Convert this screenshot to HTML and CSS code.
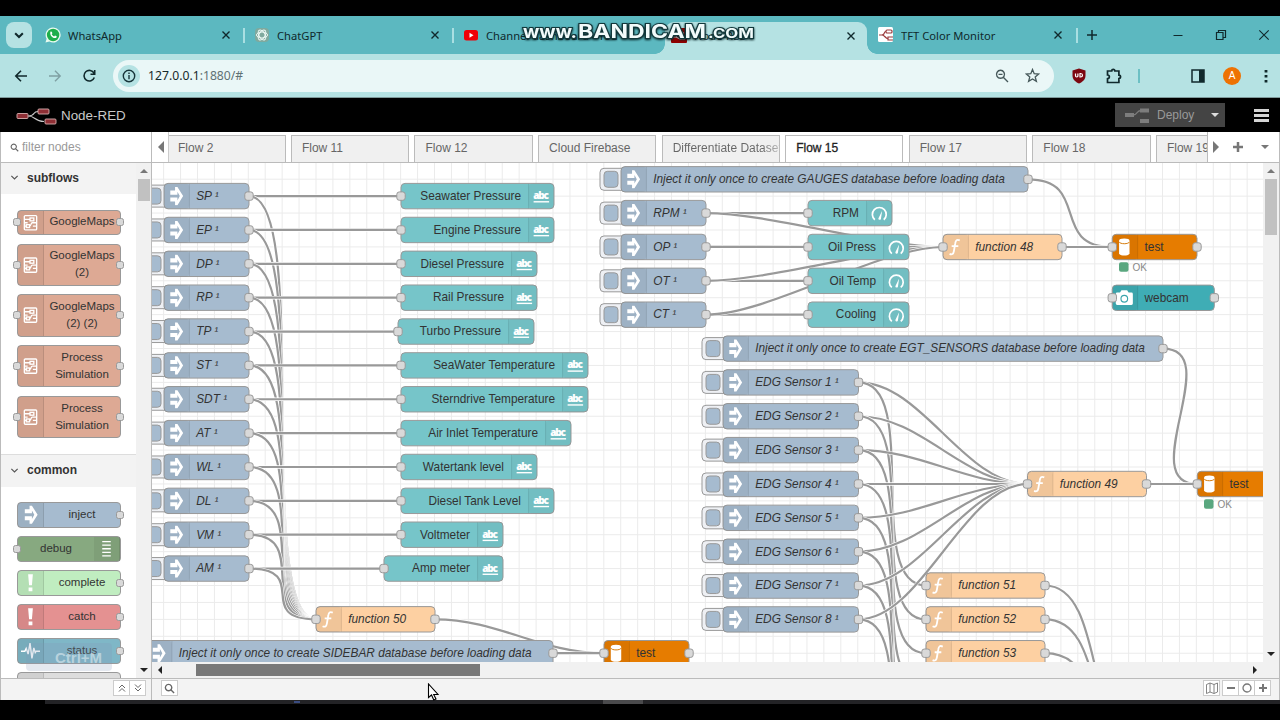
FILE: index.html
```html
<!DOCTYPE html>
<html lang="en">
<head>
    <meta charset="UTF-8">
    <meta name="viewport" content="width=device-width, initial-scale=1.0">
    <title>Node-RED</title>
    <link rel="stylesheet" href="styles.css">
</head>
<body>

    <!-- shared icons -->
    <svg class="defs" width="0" height="0">
        <symbol id="i-close" viewBox="0 0 10 10"><path d="M1.5 1.5l7 7M8.5 1.5l-7 7" stroke="currentColor" stroke-width="1.4" fill="none"/></symbol>
        <symbol id="i-inject" viewBox="0 0 20 20"><path d="M4 4.200h5V.5h2.500L17.500 10l-6 9.500H9v-3.700H4v-4.300h7.500v3L14 10l-2.500-4.500v3H4z" fill="#fff"/></symbol>
        <symbol id="i-subflow" viewBox="0 0 20 20"><g fill="none" stroke="#fff" stroke-width="1.400"><rect x="3.500" y="2.500" width="13" height="15" rx="1"/><path d="M4 6.500h5.500M4 13.500h2.500M9 13.500c2 0 1-3.500 3-3.500h4"/><rect x="9.500" y="5" width="4" height="3"/><rect x="5.500" y="12" width="3.500" height="3"/><path d="M4 10h3M12.500 13.500h4"/></g></symbol>
        <symbol id="i-func" viewBox="0 0 20 20"><path d="M15 3c-3-1.500-4.300 0-4.700 3L8.800 14.500c-.5 3-2 4-4.500 2.800M6.500 9h7" fill="none" stroke="#fff" stroke-width="1.900"/></symbol>
        <symbol id="i-db" viewBox="0 0 20 20"><path d="M4.500 4v12.500c0 3.300 11 3.300 11 0V4z" fill="#fff"/><ellipse cx="10" cy="3.500" rx="5.500" ry="2.400" fill="#fff"/><path d="M4.500 4.600c1 2.600 10 2.600 11 0" fill="none" stroke="#d27500" stroke-width="1"/></symbol>
        <symbol id="i-cam" viewBox="0 0 20 20"><path d="M1 6q0-1.500 1.500-1.500h3L7 2h6l1.500 2.500h3q1.500 0 1.500 1.500v10q0 1.500-1.500 1.500h-15Q1 17.500 1 16z" fill="#fff"/><circle cx="10" cy="11" r="3.500" fill="none" stroke="#3ba5ac" stroke-width="1.200"/></symbol>
        <symbol id="i-gauge" viewBox="0 0 20 20"><path d="M5.300 17A7.300 7.300 0 1 1 14.700 17" fill="none" stroke="#fff" stroke-width="1.800"/><path d="M13 7.500l-1.300 8.700a1.400 1.400 0 0 1-2.700-.6z" fill="#fff"/></symbol>
        <symbol id="i-bang" viewBox="0 0 20 20"><path d="M7.500 1h5l-1 11.500h-3zM8 15h4v4H8z" fill="#fff"/></symbol>
        <symbol id="i-pulse" viewBox="0 0 20 20"><path d="M0 10.500h4l1.500-3 2 6L9.500 2l2 16 2-11 1.500 5 1-1.500h4" fill="none" stroke="#fff" stroke-width="1.500"/></symbol>
        <symbol id="i-list" viewBox="0 0 20 20"><path d="M5.500 2.500h9M5.500 6.200h9M5.500 10h9M5.500 13.800h9M5.500 17.500h9" stroke="#fff" stroke-width="1.500"/></symbol>
        <symbol id="i-search" viewBox="0 0 12 12"><path d="M5 1.500a3.500 3.500 0 1 0 .01 0M7.700 7.700L11 11" fill="none" stroke="currentColor" stroke-width="1.500"/></symbol>
        <symbol id="i-chev" viewBox="0 0 10 10"><path d="M1.500 3.200L5 6.700l3.500-3.500" fill="none" stroke="currentColor" stroke-width="1.300"/></symbol>
    </svg>

    <div class="tabstrip">
        <div class="tab-search"><svg width="12" height="12" viewBox="0 0 10 10"><path d="M1.800 3.500L5 6.700l3.200-3.200" fill="none" stroke="#10292c" stroke-width="1.700"/></svg></div>
        <div class="btab">
            <svg class="fav" viewBox="0 0 16 16"><path d="M8 .5a7.500 7.500 0 1 1-3.600 14L.5 15.600l1.100-3.800A7.500 7.500 0 0 1 8 .5z" fill="#e9fbef"/><circle cx="8.100" cy="8" r="6.200" fill="#1fae4b"/><path d="M5.500 4.500l1.300.2.600 1.600-.7.900c.6 1.200 1.300 1.700 2.400 2.200l.9-.9 1.700.8-.2 1.300c-3 2-7.500-2.300-6-6.100z" fill="#fff"/></svg>
            <span class="bt-title">WhatsApp</span>
            <svg class="x" width="10" height="10"><use href="#i-close"/></svg>
        </div>
        <div class="btab sep">
            <svg class="fav" viewBox="0 0 16 16"><rect x="1" y="1" width="14" height="14" rx="4" fill="#7fa99e"/><g fill="none" stroke="#eefaf6" stroke-width="1"><ellipse cx="8" cy="8" rx="5.500" ry="3"/><ellipse cx="8" cy="8" rx="5.500" ry="3" transform="rotate(60 8 8)"/><ellipse cx="8" cy="8" rx="5.500" ry="3" transform="rotate(120 8 8)"/></g></svg>
            <span class="bt-title">ChatGPT</span>
            <svg class="x" width="10" height="10"><use href="#i-close"/></svg>
        </div>
        <div class="btab sep">
            <svg class="fav" viewBox="0 0 16 16"><rect x="1" y="3" width="14" height="10.500" rx="2.500" fill="#f00008"/><path d="M6.500 5.800v5l4-2.500z" fill="#fff"/></svg>
            <span class="bt-title">Channel dashboard - You</span>
        </div>
        <div class="btab active">
            <svg class="fav" viewBox="0 0 16 16"><rect x="0" y="0" width="16" height="15" rx="1" fill="#8f0000"/><path d="M1 9h4l4-4h4M5 9l4 2h5" stroke="#fff" fill="none"/></svg>
            <span class="bt-title">Node-RED</span>
            <svg class="x" width="10" height="10"><use href="#i-close"/></svg>
        </div>
        <div class="btab last">
            <svg class="fav" viewBox="0 0 16 16"><rect x="0" y="0" width="15" height="15" rx="1.500" fill="#fff"/><g fill="none" stroke="#9a3a3c" stroke-width="1.200"><path d="M1 8h3c3 0 3 3.500 6 3.500M4 8c4-.5 1-3.500 4-3.500"/><rect x="8" y="3" width="6" height="3" rx="1"/><path d="M15 10h-5v3h5"/></g></svg>
            <span class="bt-title">TFT Color Monitor</span>
            <svg class="x" width="10" height="10"><use href="#i-close"/></svg>
        </div>
        <svg class="newtab" width="12" height="12" viewBox="0 0 12 12"><path d="M6 1v10M1 6h10" stroke="#10292c" stroke-width="1.500"/></svg>
        <div class="winctl">
            <svg width="12" height="12" viewBox="0 0 12 12"><path d="M1.500 6.500h9" stroke="#10292c"/></svg>
            <svg width="12" height="12" viewBox="0 0 12 12"><path d="M1.500 3.500h6.500v7H1.500zM3.500 3.500v-2h7v7h-2" fill="none" stroke="#10292c" stroke-width="1.200"/></svg>
            <svg width="12" height="12" viewBox="0 0 12 12"><path d="M1.300 1.300l9.400 9.400M10.700 1.300l-9.400 9.400" stroke="#10292c" stroke-width="1.100"/></svg>
        </div>
        <svg class="bandicam" width="240" height="32" viewBox="0 0 240 32">
            <text x="5" y="21.500" font-size="17" textLength="54" lengthAdjust="spacingAndGlyphs">www.</text>
            <text x="60" y="21.500" font-size="19" textLength="128" lengthAdjust="spacingAndGlyphs">BANDICAM</text>
            <text x="190" y="21.500" font-size="13.500" textLength="46" lengthAdjust="spacingAndGlyphs">.COM</text>
        </svg>
    </div>

    <div class="toolbar">
        <svg class="nav" width="14" height="14" viewBox="0 0 14 14"><path d="M13 7H2M7 1.800L1.800 7 7 12.200" fill="none" stroke="#10292c" stroke-width="1.600"/></svg>
        <svg class="nav" width="14" height="14" viewBox="0 0 14 14"><path d="M1 7h11M7 1.800L12.200 7 7 12.200" fill="none" stroke="#7fa0a3" stroke-width="1.400"/></svg>
        <svg class="nav" width="14" height="14" viewBox="0 0 14 14"><path d="M12 4.200A5.300 5.300 0 1 0 12.300 8.500M12.700 1v4.200H8.500" fill="none" stroke="#10292c" stroke-width="1.600"/></svg>
        <div class="urlbar">
            <div class="info"><svg width="14" height="14" viewBox="0 0 14 14"><circle cx="7" cy="7" r="5.700" fill="none" stroke="#17353a" stroke-width="1.400"/><path d="M7 6v4.200M7 3.600v1.500" stroke="#17353a" stroke-width="1.400"/></svg></div>
            <span class="url">127.0.0.1<em>:1880/#</em></span>
            <svg class="zoom" width="14" height="14" viewBox="0 0 14 14"><path d="M5.500 1.300a4 4 0 1 0 .01 0M8.500 8.500l4.500 4.500M3.500 5.400h4" fill="none" stroke="#46585a" stroke-width="1.400"/></svg>
            <svg width="15" height="15" viewBox="0 0 15 15"><path d="M7.500 1.500l1.700 4.200 4.500.3-3.500 2.900 1.200 4.400-3.900-2.400-3.900 2.400 1.200-4.400L1.300 6l4.500-.3z" fill="none" stroke="#46585a" stroke-width="1.300"/></svg>
        </div>
        <div class="exts">
            <svg width="16" height="16" viewBox="0 0 16 16"><path d="M8 .5l6.500 2v5c0 4-3 6.500-6.500 8C4.500 14 1.500 11.500 1.500 7.500v-5z" fill="#7c0710"/><path d="M4.500 5.500v2.300q0 1.200 1.200 1.200t1.200-1.200V5.500M9 5.500v3.500h.7q1.800 0 1.800-1.700T9.700 5.500z" fill="none" stroke="#fff" stroke-width="1.200"/></svg>
            <svg width="16" height="16" viewBox="0 0 16 16"><path d="M1.500 3h4.200a1.600 1.600 0 0 1 3.200 0h4v4.200a1.600 1.600 0 0 1 0 3.300V14.500H1.500v-3.800c2.500-.2 2.500-3.600 0-3.700z" fill="none" stroke="#10292c" stroke-width="1.700"/></svg>
            <i class="divider"></i>
            <svg class="panel" width="14" height="14" viewBox="0 0 14 14"><rect x="1" y="1" width="12" height="12" fill="none" stroke="#10292c" stroke-width="1.500"/><path d="M8 1h5v12H8z" fill="#10292c"/></svg>
            <b class="avatar">A</b>
            <svg class="dots" width="4" height="14" viewBox="0 0 4 14"><path d="M.6 1h2.800v2.500H.6zM.6 6h2.800v2.500H.6zM.6 11h2.800v2.500H.6z" fill="#10292c"/></svg>
        </div>
    </div>

    <div class="nr-header">
        <svg width="42" height="18" viewBox="0 0 42 18"><g fill="#8f2f35" stroke="#d8b0b0" stroke-width=".9"><path d="M12 9c8 0 4-4.500 10-4.500M12 9c8 0 6 5.500 16 5.500" fill="none" stroke="#c9c9c9" stroke-width="1.200"/><rect x="1" y="6.500" width="11" height="5" rx="1"/><rect x="22" y="2" width="11" height="5" rx="1"/><rect x="29" y="12" width="11" height="5" rx="1"/></g></svg>
        <span class="brand">Node-RED</span>
        <div class="deploy">
            <svg width="26" height="18" viewBox="0 0 26 18"><g fill="#7d7d7d"><rect x="1" y="7" width="9" height="4"/><rect x="16" y="2.500" width="9" height="4"/><rect x="16" y="13" width="9" height="4"/></g><path d="M9 9c5 0 3-4.500 8-4.500" fill="none" stroke="#7d7d7d" stroke-width="1.300"/></svg>
            <span>Deploy</span>
            <i class="tri down light"></i>
        </div>
        <div class="burger"><i></i><i></i><i></i></div>
    </div>

    <div class="main">
        <div class="palette">
            <div class="filter"><svg width="9" height="9"><use href="#i-search"/></svg>filter nodes</div>
            <div class="palette-body">
                <div class="palette-list">
                    <h3><svg width="9" height="9"><use href="#i-chev"/></svg>subflows</h3>
                    <div class="group subflows">
                        <div class="pnode sub"><svg><use href="#i-subflow"/></svg><span>GoogleMaps</span><i class="in"></i><i class="out"></i></div>
                        <div class="pnode sub two"><svg><use href="#i-subflow"/></svg><span>GoogleMaps (2)</span><i class="in"></i><i class="out"></i></div>
                        <div class="pnode sub two"><svg><use href="#i-subflow"/></svg><span>GoogleMaps (2) (2)</span><i class="in"></i><i class="out"></i></div>
                        <div class="pnode sub two"><svg><use href="#i-subflow"/></svg><span>Process Simulation</span><i class="in"></i><i class="out"></i></div>
                        <div class="pnode sub two"><svg><use href="#i-subflow"/></svg><span>Process Simulation</span><i class="in"></i><i class="out"></i></div>
                    </div>
                    <h3 class="bordered"><svg width="9" height="9"><use href="#i-chev"/></svg>common</h3>
                    <div class="group">
                        <div class="pnode inject"><svg><use href="#i-inject"/></svg><span>inject</span><i class="out"></i></div>
                        <div class="pnode debug"><span>debug</span><svg><use href="#i-list"/></svg><i class="in"></i></div>
                        <div class="pnode complete"><svg><use href="#i-bang"/></svg><span>complete</span><i class="out"></i></div>
                        <div class="pnode catch"><svg><use href="#i-bang"/></svg><span>catch</span><i class="out"></i></div>
                        <div class="pnode status"><svg><use href="#i-pulse"/></svg><span>status</span><i class="out"></i></div>
                        <div class="pnode link"><svg></svg><span></span></div>
                    </div>
                </div>
                <div class="vscroll"><i class="tri up"></i><b></b><i class="tri down dark"></i></div>
                <div class="hotkey">Ctrl+M</div>
            </div>
            <div class="footer">
                <div class="btns">
                    <span><svg width="10" height="10" viewBox="0 0 10 10"><path d="M2 5l3-3 3 3M2 8.500l3-3 3 3" fill="none" stroke="#666"/></svg></span>
                    <span><svg width="10" height="10" viewBox="0 0 10 10"><path d="M2 1.500l3 3 3-3M2 5l3 3 3-3" fill="none" stroke="#666"/></svg></span>
                </div>
            </div>
        </div>

        <div class="workspace">
            <div class="flowtabs">
                <div class="scroll-l"><i class="tri left"></i></div>
                <div class="tabs">
                    <div class="ftab first">Flow 2</div>
                    <div class="ftab">Flow 11</div>
                    <div class="ftab">Flow 12</div>
                    <div class="ftab">Cloud Firebase</div>
                    <div class="ftab fade">Differentiate Dataset</div>
                    <div class="ftab current">Flow 15</div>
                    <div class="ftab">Flow 17</div>
                    <div class="ftab">Flow 18</div>
                    <div class="ftab">Flow 19</div>
                </div>
                <div class="tabctl">
                    <i class="tri right"></i>
                    <svg width="10" height="10" viewBox="0 0 10 10"><path d="M5 0v10M0 5h10" stroke="#777" stroke-width="2.500"/></svg>
                    <i class="tri down"></i>
                </div>
            </div>
            <div class="chart">
                <svg id="canvas" width="1111" height="499" viewBox="152 163 1111 499"></svg>
                <div class="vscroll big"><i class="tri up"></i><b></b><i class="tri down dark"></i></div>
            </div>
            <div class="hscroll"><i class="tri left dark"></i><b></b><i class="tri right dark"></i></div>
            <div class="footer">
                <div class="btns"><span><svg width="11" height="11"><use href="#i-search"/></svg></span></div>
                <div class="btns push"><span><svg width="12" height="12" viewBox="0 0 12 12"><path d="M.5 2.500l3.500-1.500 4 1.500 3.500-1.500v9L8 11.500 4 10 .5 11.500zM4 1v9M8 2.500v9" fill="none" stroke="#777" stroke-width=".9"/></svg></span></div>
                <div class="btns">
                    <span><svg width="10" height="10" viewBox="0 0 10 10"><path d="M1 5h8" stroke="#777" stroke-width="2"/></svg></span>
                    <span><svg width="10" height="10" viewBox="0 0 10 10"><circle cx="5" cy="5" r="4" fill="none" stroke="#777" stroke-width="1.300"/></svg></span>
                    <span><svg width="10" height="10" viewBox="0 0 10 10"><path d="M1 5h8M5 1v8" stroke="#777" stroke-width="2"/></svg></span>
                </div>
            </div>
        </div>
    </div>

    <div class="taskbar"><i class="dark"></i><i class="dot"></i><i class="lit"></i></div>

    <svg class="cursor" width="14" height="20" viewBox="0 0 14 20"><path d="M1.500 1v13.500l3-2.500 2.300 5 2.200-1-2.300-4.500H11z" fill="#fff" stroke="#000" stroke-width="1.100"/></svg>

    <script src="script.js"></script>
</body>
</html>
```

FILE: styles.css
```css
* {
    box-sizing: border-box;
}
body {
    margin: 0;
    padding-top: 16px;
    width: 1280px;
    height: 720px;
    overflow: hidden;
    background: #000;
    font-family: "Liberation Sans", Arial, sans-serif;
    font-size: 12px;
    color: #333;
}
svg {
    display: block;
    flex: none;
}
.defs {
    position: absolute;
}

/* browser tabs */
.tabstrip {
    position: relative;
    display: flex;
    align-items: center;
    height: 38px;
    background: #5cb8c0;
    color: #10292c;
    font-family: "Noto Sans", "Open Sans", sans-serif;
}
.tab-search {
    display: flex;
    align-items: center;
    justify-content: center;
    width: 26px;
    height: 26px;
    margin: 0 13px 0 6px;
    border-radius: 8px;
    background: #b5e2e3;
}
.btab {
    position: relative;
    display: flex;
    align-items: center;
    width: 209px;
    height: 32px;
    padding-right: 23px;
}
.btab.sep::before,
.btab.last::after {
    content: "";
    position: absolute;
    left: -11px;
    width: 2px;
    height: 15px;
    background: #a9dfe2;
}
.fav {
    width: 16px;
    height: 16px;
    margin-right: 7px;
}
.bt-title {
    flex: 1;
    font-size: 11.2px;
    white-space: nowrap;
    overflow: hidden;
}
.btab.sep + .btab.sep {
    width: 202px;
}
.btab.active {
    width: 202px;
    height: 32px;
    margin: 6px 0 0;
    padding: 0 11px 5px 6px;
    border-radius: 9px 9px 0 0;
    background: #b5e2e3;
}
.btab.active::before,
.btab.active::after {
    content: "";
    position: absolute;
    bottom: 0;
    left: -10px;
    width: 10px;
    height: 10px;
    background: radial-gradient(circle at 0 0, transparent 9.5px, #b5e2e3 10px);
}
.btab.active::after {
    left: auto;
    right: -10px;
    background: radial-gradient(circle at 100% 0, transparent 9.5px, #b5e2e3 10px);
}
.btab.last {
    width: 199px;
    margin-left: 11px;
    padding-right: 14px;
}
.btab.last::after {
    left: auto;
    right: -1px;
}
.newtab {
    margin-left: 9px;
}
.winctl {
    display: flex;
    gap: 31px;
    margin-left: auto;
    padding-right: 10px;
}
.bandicam {
    position: absolute;
    left: 518px;
    top: 0;
    font-family: Inter, "Liberation Sans", sans-serif;
    font-weight: 700;
    fill: #f2fbfb;
    stroke: #12383b;
    stroke-width: 2px;
    paint-order: stroke;
    filter: drop-shadow(0 1px 1px #042022);
}

/* address bar */
.toolbar {
    display: flex;
    align-items: center;
    height: 43px;
    padding: 0 12px 0 14px;
    background: #b5e2e3;
}
.toolbar .nav {
    margin-right: 20px;
}
.urlbar {
    display: flex;
    align-items: center;
    width: 942px;
    height: 32px;
    margin-left: -3px;
    padding: 0 14px 0 5px;
    border-radius: 16px;
    background: #eaf7f7;
    font-family: "Noto Sans", "Open Sans", sans-serif;
    font-size: 12.2px;
}
.info {
    display: flex;
    align-items: center;
    justify-content: center;
    width: 22px;
    height: 22px;
    margin-right: 8px;
    border-radius: 50%;
    background: #b5e2e3;
}
.url {
    flex: 1;
    color: #17292b;
}
.url em {
    font-style: normal;
    color: #5f7173;
}
.urlbar .zoom {
    margin-right: 16px;
}
.exts {
    display: flex;
    align-items: center;
    flex: 1;
    padding-left: 17px;
}
.exts svg + svg {
    margin-left: 19px;
}
.divider {
    width: 2px;
    height: 14px;
    margin: 0 51px 0 16px;
    background: #6cc0c4;
}
.avatar {
    width: 18px;
    height: 18px;
    margin: 0 24px 0 18px;
    border-radius: 50%;
    background: #ee7203;
    color: #fff;
    font-size: 10px;
    font-weight: normal;
    line-height: 18px;
    text-align: center;
}
.exts .dots {
    margin-left: -1px;
}

/* editor header */
.nr-header {
    display: flex;
    align-items: center;
    height: 35px;
    padding: 1px 11px 0 16px;
    border-top: 1px solid #7f9a9b;
    background: #000;
}
.brand {
    margin-left: 3px;
    font-size: 13.4px;
    color: #c9c9c9;
}
.deploy {
    display: flex;
    align-items: center;
    width: 110px;
    height: 24px;
    margin: 0 29px 2px auto;
    padding: 0 6px 0 9px;
    background: #444;
    color: #999;
    font-size: 12px;
}
.deploy span {
    flex: 1;
    margin-left: 7px;
}
.burger {
    width: 15px;
}
.burger i {
    display: block;
    height: 2.5px;
    margin: 2.5px 0;
    background: #d5d5d5;
}

/* small triangles */
.tri {
    width: 0;
    height: 0;
    border: 4px solid transparent;
    color: #777;
}
.tri.light { color: #ddd; }
.tri.dark { color: #222; }
.tri.up { border-top: 0; border-bottom-color: currentColor; }
.tri.down { border-bottom: 0; border-top-color: currentColor; }
.tri.left { border-left: 0; border-right-color: currentColor; }
.tri.right { border-right: 0; border-left-color: currentColor; }

.main {
    display: flex;
    height: 568px;
    border: 1px solid #bbb;
    border-width: 0 1px;
    background: #fff;
}

/* palette */
.palette {
    display: flex;
    flex-direction: column;
    width: 151px;
    border-right: 1px solid #bbb;
}
.filter {
    display: flex;
    align-items: center;
    gap: 3px;
    height: 31px;
    padding-left: 9px;
    border-bottom: 1px solid #bbb;
    color: #999;
}
.filter svg {
    color: #666;
}
.palette-body {
    position: relative;
    display: flex;
    height: 515px;
    overflow: hidden;
}
.palette-list {
    width: 135px;
}
.palette h3 {
    display: flex;
    align-items: center;
    height: 31px;
    margin: 0;
    padding: 0 0 2px 9px;
    background: #f3f3f3;
    font-size: 12px;
    color: #333;
}
.palette h3 svg {
    margin-right: 8px;
    color: #555;
}
.palette h3.bordered {
    height: 33px;
    border-top: 1px solid #ddd;
}
.group {
    display: flex;
    flex-direction: column;
    gap: 8.6px;
    padding: 15px 15px 0 16px;
}
.group.subflows {
    height: 260px;
    padding-top: 15.5px;
}
.pnode {
    position: relative;
    display: flex;
    align-items: center;
    flex: none;
    width: 104px;
    height: 25.5px;
    border: 1px solid #999;
    border-radius: 4px;
    font-size: 11.5px;
    line-height: 17px;
    text-align: center;
}
.pnode > svg {
    width: 26px;
    height: 100%;
    padding: 0 3px;
    background: rgba(0, 0, 0, 0.06);
    border-right: 1px solid rgba(0, 0, 0, 0.1);
}
.pnode span {
    flex: 1;
    padding: 0 2px 1px;
}
.pnode.two {
    height: 42.2px;
}
.pnode i {
    position: absolute;
    top: calc(50% - 4px);
    width: 8px;
    height: 8px;
    border: 1px solid #999;
    border-radius: 2.5px;
    background: #d9d9d9;
}
.pnode .in { left: -5px; }
.pnode .out { right: -4px; }
.sub { background: #dda994; }
.inject { background: #a6bbcf; }
.debug { background: #87a980; }
.complete { background: #c0edc0; }
.catch { background: #e49191; }
.status { background: #7fb7c7; }
.link { background: #ddd; }
.hotkey {
    position: absolute;
    left: 25px;
    top: 480px;
    width: 86px;
    height: 28px;
    padding-left: 29px;
    border-radius: 4px;
    background: rgba(130, 150, 180, 0.22);
    color: rgba(255, 255, 255, 0.45);
    font-size: 15px;
    font-weight: bold;
    line-height: 30px;
    white-space: nowrap;
}

/* scrollbars */
.vscroll {
    display: flex;
    flex-direction: column;
    align-items: center;
    width: 15px;
    padding: 6px 0;
    background: #f1f1f1;
}
.vscroll b {
    width: 12px;
    height: 22px;
    margin: 6px 0 auto;
    background: #c1c1c1;
}
.vscroll.big {
    width: 16px;
}
.vscroll.big b {
    height: 56px;
}
.hscroll {
    display: flex;
    align-items: center;
    height: 16px;
    padding: 0 22px 0 6px;
    background: #f1f1f1;
}
.hscroll b {
    width: 284px;
    height: 12px;
    margin: 0 auto 0 34px;
    background: #787878;
}

.footer {
    display: flex;
    align-items: center;
    gap: 3px;
    height: 22px;
    padding: 0 7px 3px 9px;
    border-top: 1px solid #bbb;
    background: #f3f3f3;
}
.palette .footer {
    justify-content: flex-end;
    padding-right: 4px;
}
.btns {
    display: flex;
    color: #666;
}
.btns.push {
    margin-left: auto;
}
.btns span {
    display: flex;
    align-items: center;
    justify-content: center;
    width: 17px;
    height: 16px;
    margin-right: -1px;
    border: 1px solid #ccc;
    background: #fff;
}
.btns:last-child {
    margin-right: 2px;
}

/* workspace */
.workspace {
    flex: 1;
    min-width: 0;
}
.flowtabs {
    display: flex;
    height: 31px;
    border-bottom: 1px solid #bbb;
}
.scroll-l {
    display: flex;
    align-items: center;
    width: 17px;
    padding-left: 6px;
    border-right: 1px solid #ccc;
}
.scroll-l .tri,
.tabctl .tri.right {
    border-width: 6px;
}
.scroll-l .tri {
    border-left: 0;
}
.tabctl .tri.right {
    border-right: 0;
}
.tabs {
    display: flex;
    gap: 5.4px;
    width: 1038px;
    padding-top: 3px;
    overflow: hidden;
}
.ftab {
    flex: none;
    width: 118.2px;
    height: 27px;
    padding-left: 10px;
    border: 1px solid #bbb;
    border-bottom: 0;
    background: #f0f0f0;
    color: #666;
    line-height: 24px;
    white-space: nowrap;
    overflow: hidden;
}
.ftab.first {
    width: 116.5px;
    padding-left: 9px;
    border-left: 0;
}
/* long names fade out at the right end of the tab */
.ftab.fade {
    background: linear-gradient(to right, #666 85%, #bbb) text, #f0f0f0;
    color: transparent;
}
.ftab.current {
    height: 28px;
    background: #fff;
    color: #222;
    -webkit-text-stroke: 0.3px #222;
}
.tabctl {
    display: flex;
    flex: 1;
    align-items: center;
    justify-content: space-between;
    padding: 0 10px 0 5px;
    border-left: 1px solid #bbb;
}
.tabctl svg {
    margin-left: -4px;
}
.chart {
    display: flex;
    height: 499px;
}

/* nodes and wires on the canvas */
.grid path {
    stroke: #ebebeb;
}
.wire {
    fill: none;
    stroke: #999;
    stroke-width: 2.2;
}
.outline {
    fill: none;
    stroke: #fff;
    stroke-width: 3.4;
}
.body {
    stroke: #999;
}
.shade {
    fill: #000;
    fill-opacity: 0.05;
}
.shade.text,
.shade.gauge {
    fill-opacity: 0.03;
}
.edge {
    stroke: #000;
    stroke-opacity: 0.1;
}
.port {
    fill: #d9d9d9;
    stroke: #999;
}
.btn-outer {
    fill: #eef0f4;
    stroke: #999;
}
.label {
    font-size: 11.85px;
    fill: #333;
}
.label.italic {
    font-style: italic;
}
.abc {
    font-family: "Open Sans", sans-serif;
    font-size: 10px;
    font-weight: 800;
    fill: #fff;
}
.ok {
    font-size: 10px;
    fill: #888;
}

.taskbar {
    display: flex;
    height: 4px;
    background: #232326;
}
.taskbar .dark {
    width: 45px;
    background: #000;
}
.taskbar .dot {
    width: 6px;
    height: 2px;
    margin: 1px 303px 0 249px;
    background: #3a4c80;
}
.taskbar .lit {
    width: 40px;
    background: #4a4a4c;
}
.cursor {
    position: absolute;
    left: 427px;
    top: 683px;
}
```

FILE: script.js
```js
// canvas is drawn at 0.846 zoom: 20px grid -> 16.93, 30px nodes -> 25.4
const STEP = 16.93;
const ROW = STEP * 2;
const H = 25.4;
const colors = {
    inject: '#a6bbcf',
    func: '#fdd0a2',
    text: '#76c5c9',
    gauge: '#76c5c9',
    db: '#e67c00',
    cam: '#3fadb5'
};

let grid = '';
let wires = '';
let nodes = '';

for (let x = 1111.7 - STEP * 56; x < 1263; x += STEP) {
    grid += `<path d="M${x} 163V662"/>`;
}
for (let y = 179.2; y < 662; y += STEP) {
    grid += `<path d="M152 ${y}H1263"/>`;
}

function wire(x1, y1, x2, y2) {
    const dist = Math.hypot(x2 - x1, y2 - y1);
    const c = 63.5 * Math.min(1, dist / 84.6);
    const d = `M${x1} ${y1}C${x1 + c} ${y1} ${x2 - c} ${y2} ${x2} ${y2}`;
    wires += `<path class="outline" d="${d}"/><path class="wire" d="${d}"/>`;
}

function port(x, y) {
    return `<rect class="port" x="${x - 4.2}" y="${y - 4.2}" width="8.4" height="8.4" rx="2.5"/>`;
}

function node(type, x1, x2, y, label, ports) {
    const right = type === 'text' || type === 'gauge';
    const italic = type === 'inject' || type === 'func';
    const sx = right ? x2 - H : x1;
    const ex = right ? sx : x1 + H;
    const top = y - H / 2;
    let s = '';
    if (type === 'inject') {
        s += `<rect class="btn-outer" x="${x1 - 21}" y="${y - 11}" width="27" height="22" rx="4"/>`;
        s += `<rect class="body" x="${x1 - 17}" y="${y - 8}" width="14" height="16" rx="3.5" fill="${colors.inject}"/>`;
    }
    s += `<rect class="body" x="${x1}" y="${top}" width="${x2 - x1}" height="${H}" rx="4" fill="${colors[type]}"/>`;
    s += `<rect class="shade ${type}" x="${sx}" y="${top}" width="${H}" height="${H}" rx="4"/>`;
    s += `<path class="edge" d="M${ex} ${top + 0.5}v${H - 1}"/>`;
    if (type === 'text') {
        s += `<text class="abc" x="${sx + 4.7}" y="${y + 3}" textLength="15.5">abc</text>`;
        s += `<path d="M${sx + 5} ${y + 5.7}h15.500" stroke="#fff" stroke-width="1.400"/>`;
    } else {
        const size = type === 'gauge' ? 19 : 19;
        s += `<use href="#i-${type}" x="${sx + (H - size) / 2 - (right ? 0 : 0.7)}" y="${y - size / 2}" width="${size}" height="${size}"/>`;
    }
    const tx = right ? x2 - 33 : x1 + 32.2;
    s += `<text class="label${italic ? ' italic' : ''}" x="${tx}" y="${y + 3.8}" text-anchor="${right ? 'end' : 'start'}">${label}</text>`;
    if (ports.includes('i')) s += port(x1, y);
    if (ports.includes('o')) s += port(x2, y);
    nodes += s;
}

function status(x, y) {
    nodes += `<rect x="${x}" y="${y - 4.7}" width="9.500" height="9.500" rx="2" fill="#5aa77f"/>`;
    nodes += `<text class="ok" x="${x + 13.5}" y="${y + 3.7}">OK</text>`;
}

// sidebar sensors
const sidebar = [
    ['SP', 'Seawater Pressure', 401, 554],
    ['EP', 'Engine Pressure', 401, 554],
    ['DP', 'Diesel Pressure', 401, 537],
    ['RP', 'Rail Pressure', 401, 537],
    ['TP', 'Turbo Pressure', 398, 534],
    ['ST', 'SeaWater Temperature', 401, 588],
    ['SDT', 'Sterndrive Temperature', 401, 588],
    ['AT', 'Air Inlet Temperature', 401, 571],
    ['WL', 'Watertank level', 401, 537],
    ['DL', 'Diesel Tank Level', 401, 554],
    ['VM', 'Voltmeter', 401, 503],
    ['AM', 'Amp meter', 384, 503]
];
sidebar.forEach(([code, label, x1, x2], i) => {
    const y = 196.1 + ROW * i;
    wire(249, y, x1, y);
    wire(249, y, 316, 619.3);
    node('inject', 164, 249, y, code + ' ¹', 'o');
    node('text', x1, x2, y, label, 'i');
});
wire(435, 619.3, 604, 653.2);
wire(553, 653.2, 604, 653.2);
node('func', 316, 435, 619.3, 'function 50', 'io');
node('inject', 146.5, 553, 653.2, 'Inject it only once to create SIDEBAR database before loading data', 'o');
node('db', 604, 689, 653.2, 'test', 'io');

// gauges
node('inject', 621, 1028, 179.3, 'Inject it only once to create GAUGES database before loading data', 'o');
wire(1028, 179.3, 1112.3, 247);
[['RPM', 'RPM', 892], ['OP', 'Oil Press', 909], ['OT', 'Oil Temp', 909], ['CT', 'Cooling', 909]].forEach(([code, label, x2], i) => {
    const y = 213.1 + ROW * i;
    wire(706, y, 808, y);
    wire(706, y, 943, 247);
    node('inject', 621, 706, y, code + ' ¹', 'o');
    node('gauge', 808, x2, y, label, 'i');
});
wire(1062, 247, 1112.3, 247);
node('func', 943, 1062, 247, 'function 48', 'io');
node('db', 1112.3, 1197, 247, 'test', 'io');
status(1119, 267);
node('cam', 1112.3, 1214.3, 297.8, 'webcam', 'io');

// exhaust gas temperature
node('inject', 723, 1163, 348.6, 'Inject it only once to create EGT_SENSORS database before loading data', 'o');
wire(1163, 348.6, 1197.3, 484);
for (let i = 0; i < 8; i++) {
    const y = 382.4 + ROW * i;
    wire(858.5, y, 1027.5, 484);
    wire(858.5, y, 926, 585.6 + ROW * i);
    node('inject', 723, 858.5, y, `EDG Sensor ${i + 1} ¹`, 'o');
}
wire(1146.5, 484, 1197.3, 484);
node('func', 1027.5, 1146.5, 484, 'function 49', 'io');
node('db', 1197.3, 1282, 484, 'test', 'io');
status(1204, 504);
for (let i = 0; i < 3; i++) {
    const y = 585.5 + ROW * i;
    wire(1045, y, 1147, 755);
    node('func', 926, 1045, y, `function ${51 + i}`, 'io');
}

document.getElementById('canvas').innerHTML = `<g class="grid">${grid}</g>${wires}${nodes}`;
```
